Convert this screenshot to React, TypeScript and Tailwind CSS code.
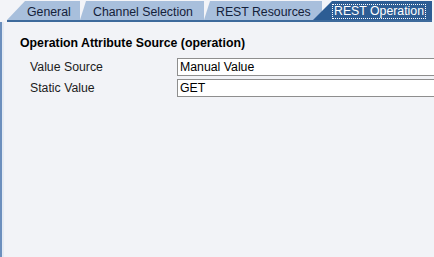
import React from "react";

type Tab = {
  label: string;
  width: number;
  slant: number;
  overlap: number;
  pad: number;
  active?: boolean;
};

const TABS: Tab[] = [
  { label: "General", width: 73, slant: 18, overlap: 0, pad: 20 },
  { label: "Channel Selection", width: 124, slant: 6, overlap: 0, pad: 13 },
  { label: "REST Resources", width: 118, slant: 6, overlap: 0, pad: 12 },
  { label: "REST Operation", width: 119, slant: 19, overlap: 9, pad: 19, active: true },
];

function TabItem({ tab }: { tab: Tab }) {
  // slanted left edge, like the old SAP tab strip
  const clip = `polygon(${tab.slant}px 0, 100% 0, 100% 100%, 0 100%)`;
  return (
    <div
      className={
        "relative flex h-[19px] shrink-0 items-center pt-[2px] " +
        (tab.active ? "bg-[#2d5d94] text-white" : "bg-[#a8bfdc] text-[#14213a]")
      }
      style={{
        width: tab.width,
        marginLeft: -tab.overlap,
        paddingLeft: tab.pad,
        clipPath: clip,
      }}
    >
      {tab.active ? (
        <span className="border border-dotted border-white px-px leading-[13px]">{tab.label}</span>
      ) : (
        <span className="leading-[14px]">{tab.label}</span>
      )}
    </div>
  );
}

function Field({ label, value }: { label: string; value: string }) {
  return (
    <div className="flex h-[18px] items-center">
      <div className="w-[147px] shrink-0 text-[#1c1c1c]">{label}</div>
      <div className="flex h-[18px] w-[270px] shrink-0 items-center border border-[#8e8e8e] bg-white pl-[2px] text-black">
        {value}
      </div>
    </div>
  );
}

export default function App() {
  return (
    <div
      className="h-[257px] w-[434px] overflow-hidden bg-[#f3f4f8] text-[12.3px]"
      style={{ fontFamily: '"Liberation Sans", Arial, sans-serif' }}
    >
      <div className="flex h-[22px] items-end pl-[7px]">
        <div className="flex items-end border-b-2 border-[#3e6a9c]">
          {TABS.map((t) => (
            <TabItem key={t.label} tab={t} />
          ))}
        </div>
      </div>
      <div className="flex h-[235px]">
        <div className="w-[2px] shrink-0 bg-[#6c8fbd]" />
        <div className="w-[2px] shrink-0 bg-[#e4eaf3]" />
        <div className="min-w-0 flex-1 overflow-hidden bg-[#f2f3f7] pl-[16px] pt-[12px]">
          <div className="font-bold text-black">Operation Attribute Source (operation)</div>
          <div className="mt-[6px] flex flex-col gap-[3px] pl-[10px]">
            <Field label="Value Source" value="Manual Value" />
            <Field label="Static Value" value="GET" />
          </div>
        </div>
      </div>
    </div>
  );
}
